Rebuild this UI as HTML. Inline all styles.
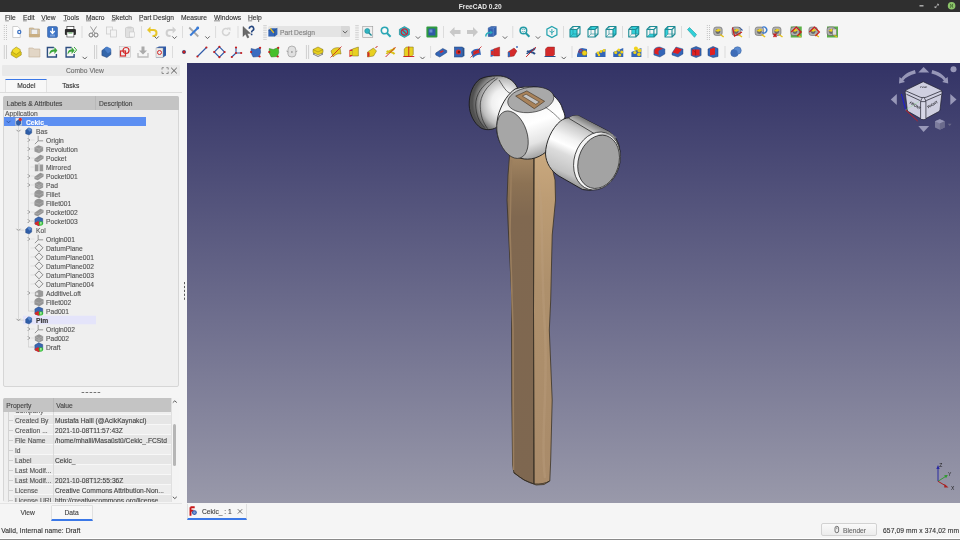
<!DOCTYPE html>
<html><head><meta charset="utf-8">
<style>
*{margin:0;padding:0;box-sizing:border-box}
#root{position:absolute;left:0;top:0;width:960px;height:540px;will-change:transform}
html,body{width:960px;height:540px;overflow:hidden;background:#f5f5f5;font-family:"Liberation Sans",sans-serif;font-size:6.7px;color:#3a3a3a}
.a{position:absolute;white-space:nowrap;line-height:8px;-webkit-text-stroke:0.12px currentColor}
svg{position:absolute;overflow:visible}
#vp{position:absolute;left:187px;top:63px;width:773px;height:440px;background:linear-gradient(#333366,#9999aa);overflow:hidden}
.m{color:#333}
</style></head><body><div id="root">
<div style="position:absolute;left:0;top:0;width:960px;height:11.7px;background:#2f2f2f"></div>
<div class="a" style="left:458.8px;top:3.3px;color:#e8e8e8;font-weight:bold;font-size:6.6px;-webkit-text-stroke:0">FreeCAD 0.20</div>
<svg style="left:0;top:0" width="960" height="12">
<rect x="919.5" y="5.1" width="4" height="1.4" fill="#b4b4b4"/>
<path d="M935,7.6l1.6,-1.6M935,7.6v-1.4M935,7.6h1.4M938.4,4.2l-1.6,1.6M938.4,4.2v1.4M938.4,4.2h-1.4" stroke="#c4c4c4" stroke-width="0.8" fill="none"/>
<circle cx="951.6" cy="5.8" r="3.8" fill="#8cc56a"/>
<path d="M950.3,3.9c0.9,1.2 0.9,2.6 0,3.8M952.9,3.9c-0.9,1.2 -0.9,2.6 0,3.8" stroke="#2c4a20" stroke-width="0.8" fill="none"/>
</svg>
<div class="a m" style="left:5px;top:13.6px">File</div>
<div class="a m" style="left:23px;top:13.6px">Edit</div>
<div class="a m" style="left:41.3px;top:13.6px">View</div>
<div class="a m" style="left:63.4px;top:13.6px">Tools</div>
<div class="a m" style="left:86px;top:13.6px">Macro</div>
<div class="a m" style="left:111.6px;top:13.6px">Sketch</div>
<div class="a m" style="left:139px;top:13.6px">Part Design</div>
<div class="a m" style="left:181px;top:13.6px">Measure</div>
<div class="a m" style="left:214px;top:13.6px">Windows</div>
<div class="a m" style="left:248px;top:13.6px">Help</div>
<svg style="left:0;top:0" width="960" height="25">
<rect x="5.2" y="20.6" width="3.6" height="0.6" fill="#444"/>
<rect x="23" y="20.6" width="3.8" height="0.6" fill="#444"/>
<rect x="41.3" y="20.6" width="4" height="0.6" fill="#444"/>
<rect x="63.4" y="20.6" width="3.6" height="0.6" fill="#444"/>
<rect x="86" y="20.6" width="5" height="0.6" fill="#444"/>
<rect x="111.6" y="20.6" width="4" height="0.6" fill="#444"/>
<rect x="139" y="20.6" width="4" height="0.6" fill="#444"/>
<rect x="214" y="20.6" width="6" height="0.6" fill="#444"/>
<rect x="248" y="20.6" width="4.2" height="0.6" fill="#444"/>
</svg>
<svg style="left:0;top:0" width="960" height="64"><rect x="3.8000000000000003" y="25" width="1" height="1" fill="#c4c4c4"/><rect x="6.0" y="25" width="1" height="1" fill="#c4c4c4"/><rect x="3.8000000000000003" y="27" width="1" height="1" fill="#c4c4c4"/><rect x="6.0" y="27" width="1" height="1" fill="#c4c4c4"/><rect x="3.8000000000000003" y="29" width="1" height="1" fill="#c4c4c4"/><rect x="6.0" y="29" width="1" height="1" fill="#c4c4c4"/><rect x="3.8000000000000003" y="31" width="1" height="1" fill="#c4c4c4"/><rect x="6.0" y="31" width="1" height="1" fill="#c4c4c4"/><rect x="3.8000000000000003" y="33" width="1" height="1" fill="#c4c4c4"/><rect x="6.0" y="33" width="1" height="1" fill="#c4c4c4"/><rect x="3.8000000000000003" y="35" width="1" height="1" fill="#c4c4c4"/><rect x="6.0" y="35" width="1" height="1" fill="#c4c4c4"/><rect x="3.8000000000000003" y="37" width="1" height="1" fill="#c4c4c4"/><rect x="6.0" y="37" width="1" height="1" fill="#c4c4c4"/><rect x="3.8000000000000003" y="39" width="1" height="1" fill="#c4c4c4"/><rect x="6.0" y="39" width="1" height="1" fill="#c4c4c4"/><g transform="translate(10.25,26.0) scale(1.0)"><path d="M2.5,0.5h5l2.5,2.5v8.5h-7.5z" fill="#fff" stroke="#bbb" stroke-width="0.7"/><circle cx="9" cy="6" r="2.2" fill="#3e73c4"/><circle cx="9" cy="6" r="0.9" fill="#fff"/></g><g transform="translate(28.4,26.0) scale(1.0)"><path d="M1,2h4l1,1h5v8h-10z" fill="#d9c4a0" stroke="#b39a74" stroke-width="0.6"/><rect x="3" y="3.5" width="6" height="5" fill="#eee" stroke="#aaa" stroke-width="0.4"/><path d="M0.5,8h11l-0.5,3h-10z" fill="#c9ae82"/></g><g transform="translate(46.5,26.0) scale(1.0)"><rect x="1" y="0.5" width="10" height="11" rx="1.5" fill="#3d74c6" stroke="#2a5596" stroke-width="0.5"/><path d="M6,2v5M3.8,5l2.2,2.5l2.2,-2.5" stroke="#fff" stroke-width="1.3" fill="none"/><rect x="3.5" y="8.5" width="5" height="2" fill="#7aa0d8"/></g><g transform="translate(64.4,26.0) scale(1.0)"><rect x="2.5" y="0.5" width="7" height="3" fill="#fff" stroke="#333" stroke-width="0.7"/><rect x="0.5" y="3" width="11" height="6" rx="1" fill="#2b2b2b"/><rect x="2.5" y="6" width="7" height="5" fill="#fff" stroke="#333" stroke-width="0.6"/><rect x="4" y="6.5" width="4" height="1" fill="#5a5"/></g><rect x="81.5" y="26" width="1" height="12" fill="#dcdcdc"/><g transform="translate(87.5,26.0) scale(1.0)"><circle cx="3.5" cy="9" r="2" fill="none" stroke="#777" stroke-width="1"/><circle cx="8.5" cy="9" r="2" fill="none" stroke="#777" stroke-width="1"/><path d="M4.5,7.5L9,0.5M7.5,7.5L3,0.5" stroke="#999" stroke-width="1"/></g><g transform="translate(105.6,26.0) scale(1.0)"><rect x="1" y="1" width="6" height="7" fill="#f4f4f4" stroke="#c8c8c8" stroke-width="0.7"/><rect x="5" y="4" width="6" height="7" fill="#f4f4f4" stroke="#c8c8c8" stroke-width="0.7"/></g><g transform="translate(124.0,26.0) scale(1.0)"><rect x="1.5" y="1.5" width="8" height="10" rx="1" fill="#e0e0e0" stroke="#c4c4c4" stroke-width="0.7"/><rect x="3.5" y="0.5" width="4" height="2" fill="#cfcfcf"/><rect x="5.5" y="6" width="5" height="5" fill="#f6f6f6" stroke="#c8c8c8" stroke-width="0.6"/></g><rect x="141.0" y="26" width="1" height="12" fill="#dcdcdc"/><g transform="translate(146.5,25.5) scale(1.0)"><path d="M3,4.5h4a3,3 0 0 1 0,6h-1" fill="none" stroke="#e8c62a" stroke-width="2"/><path d="M0.5,4.5l3.5,-3.5v7z" fill="#e8c62a"/></g><path d="M154.4,36.4 L156.6,38.6 L158.79999999999998,36.4" fill="none" stroke="#555" stroke-width="0.9"/><g transform="translate(164.6,25.5) scale(1.0)"><path d="M9,4.5h-4a3,3 0 0 0 0,6h1" fill="none" stroke="#cfcfcf" stroke-width="2"/><path d="M11.5,4.5l-3.5,-3.5v7z" fill="#cfcfcf"/></g><path d="M172.3,36.4 L174.5,38.6 L176.7,36.4" fill="none" stroke="#555" stroke-width="0.9"/><rect x="182.0" y="26" width="1" height="12" fill="#dcdcdc"/><g transform="translate(187.75,26.0) scale(1.0)"><path d="M1.5,1.5l9,9" stroke="#aaa" stroke-width="1.8"/><path d="M10.5,1.5l-8,8" stroke="#3a7bd5" stroke-width="2"/><circle cx="10" cy="2" r="1.4" fill="#3a7bd5"/></g><path d="M205.3,36.4 L207.5,38.6 L209.7,36.4" fill="none" stroke="#555" stroke-width="0.9"/><rect x="215.1" y="26" width="1" height="12" fill="#dcdcdc"/><g transform="translate(220.0,26.0) scale(1.0)"><path d="M9.5,6a3.5,3.5 0 1 1 -1.2,-2.7" fill="none" stroke="#d4d4d4" stroke-width="1.6"/><path d="M7,1.5h3.5v3.5z" fill="#d4d4d4"/></g><rect x="237.5" y="26" width="1" height="12" fill="#dcdcdc"/><g transform="translate(242.0,26.0) scale(1.0)"><path d="M1,0.5v10l2.5,-2.5l2,4l1.5,-0.8l-2,-3.8h3.5z" fill="#6a6a6a" stroke="#444" stroke-width="0.4"/><path d="M7.3,2.8a2.2,2.2 0 1 1 3.2,1.8c-0.7,0.5 -0.9,0.9 -0.9,1.9" fill="none" stroke="#24457e" stroke-width="1.6"/><circle cx="9.6" cy="8.4" r="0.9" fill="#24457e"/></g><rect x="263.2" y="25" width="3.6" height="0.8" fill="#cfcfcf"/><rect x="263.2" y="26.75" width="3.6" height="0.8" fill="#cfcfcf"/><rect x="263.2" y="28.5" width="3.6" height="0.8" fill="#cfcfcf"/><rect x="263.2" y="30.25" width="3.6" height="0.8" fill="#cfcfcf"/><rect x="263.2" y="32.0" width="3.6" height="0.8" fill="#cfcfcf"/><rect x="263.2" y="33.75" width="3.6" height="0.8" fill="#cfcfcf"/><rect x="263.2" y="35.5" width="3.6" height="0.8" fill="#cfcfcf"/><rect x="263.2" y="37.25" width="3.6" height="0.8" fill="#cfcfcf"/><rect x="263.2" y="39.0" width="3.6" height="0.8" fill="#cfcfcf"/><rect x="355.2" y="25" width="3.6" height="0.8" fill="#cfcfcf"/><rect x="355.2" y="26.75" width="3.6" height="0.8" fill="#cfcfcf"/><rect x="355.2" y="28.5" width="3.6" height="0.8" fill="#cfcfcf"/><rect x="355.2" y="30.25" width="3.6" height="0.8" fill="#cfcfcf"/><rect x="355.2" y="32.0" width="3.6" height="0.8" fill="#cfcfcf"/><rect x="355.2" y="33.75" width="3.6" height="0.8" fill="#cfcfcf"/><rect x="355.2" y="35.5" width="3.6" height="0.8" fill="#cfcfcf"/><rect x="355.2" y="37.25" width="3.6" height="0.8" fill="#cfcfcf"/><rect x="355.2" y="39.0" width="3.6" height="0.8" fill="#cfcfcf"/><g transform="translate(361.75,26.0) scale(1.0)"><rect x="1" y="0.5" width="10" height="11" fill="#f0f0f0" stroke="#999" stroke-width="0.6"/><circle cx="5.5" cy="5" r="2.5" fill="#2fb3c0" stroke="#1b8a95" stroke-width="0.6"/><path d="M7,6.8l2.8,2.8" stroke="#1b8a95" stroke-width="1.4"/></g><g transform="translate(379.6,26.0) scale(1.0)"><circle cx="5" cy="4.5" r="3.3" fill="none" stroke="#2aa6b4" stroke-width="1.6"/><circle cx="5" cy="4.5" r="1.2" fill="#fff"/><path d="M7.3,7l3.7,3.7" stroke="#2aa6b4" stroke-width="2"/></g><g transform="translate(398.4,26.0) scale(1.0)"><path d="M6,0.5l5,2.8v5.4l-5,2.8l-5,-2.8v-5.4z" fill="#2ab7c4" stroke="#167f8a" stroke-width="0.6"/><circle cx="6" cy="6" r="3.2" fill="none" stroke="#c8243a" stroke-width="1.2"/><path d="M3.8,3.8l4.4,4.4" stroke="#c8243a" stroke-width="1.2"/></g><path d="M415.8,36.4 L418,38.6 L420.2,36.4" fill="none" stroke="#555" stroke-width="0.9"/><g transform="translate(425.9,26.0) scale(1.0)"><rect x="0.5" y="0.5" width="11" height="11" rx="1" fill="#2e9a3e"/><rect x="2.5" y="2.5" width="7" height="7" fill="#2f5aa8"/><rect x="3.5" y="3.5" width="3" height="3" fill="#6a8fd0"/></g><rect x="443.0" y="26" width="1" height="12" fill="#dcdcdc"/><g transform="translate(449.0,26.0) scale(1.0)"><path d="M0.5,6l5,-5v3h6v4h-6v3z" fill="#c8c8c8"/></g><g transform="translate(466.5,26.0) scale(1.0)"><path d="M11.5,6l-5,-5v3h-6v4h6v3z" fill="#c8c8c8"/></g><g transform="translate(485.25,26.0) scale(1.0)"><path d="M3,2l3,-1.5h5v8l-3,2h-5z" fill="#3362b0" stroke="#234a8a" stroke-width="0.5"/><path d="M3,2h5v8M8,2l3,-1.5" stroke="#6f93d4" stroke-width="0.6" fill="none"/><path d="M0.5,10.5c0,-3 2,-4 5,-4" stroke="#2ab0bd" stroke-width="1.5" fill="none"/><path d="M5,4.5l2.5,2l-2.5,2z" fill="#2ab0bd"/></g><path d="M502.8,36.4 L505,38.6 L507.2,36.4" fill="none" stroke="#555" stroke-width="0.9"/><rect x="512.25" y="26" width="1" height="12" fill="#dcdcdc"/><g transform="translate(518.4,26.0) scale(1.0)"><circle cx="5" cy="4.5" r="3.3" fill="none" stroke="#239aa6" stroke-width="1.5"/><path d="M3.5,4a1.6,1.6 0 0 1 3,0M6.5,5a1.6,1.6 0 0 1 -3,0" stroke="#239aa6" stroke-width="0.7" fill="none"/><path d="M7.3,7l3.7,3.7" stroke="#239aa6" stroke-width="2"/></g><path d="M535.8,36.4 L538,38.6 L540.2,36.4" fill="none" stroke="#555" stroke-width="0.9"/><g transform="translate(545.9,26.0) scale(1.0)"><path d="M6,0.5l5,2.7v5.6l-5,2.7l-5,-2.7v-5.6z" fill="none" stroke="#23a2ad" stroke-width="1.2"/><path d="M6,3v6M3.5,5l2.5,1.5l2.5,-1.5" stroke="#23a2ad" stroke-width="0.9" fill="none"/></g><rect x="563.0" y="26" width="1" height="12" fill="#dcdcdc"/><g transform="translate(569.0,26.0) scale(1.0)"><path d="M1,3.5h7v7.5h-7z" fill="#33d0da"/><path d="M4,0.5v7.5h7M4,8l-3,3" fill="none" stroke="#1e8c95" stroke-width="0.6"/><path d="M1,3.5l3,-3h7v7.5l-3,3h-7z M1,3.5h7v7.5M8,3.5l3,-3" fill="none" stroke="#1e8c95" stroke-width="1.1" stroke-linejoin="round"/></g><g transform="translate(587.0,26.0) scale(1.0)"><path d="M1,3.5l3,-3h7l-3,3z" fill="#33d0da"/><path d="M4,0.5v7.5h7M4,8l-3,3" fill="none" stroke="#1e8c95" stroke-width="0.6"/><path d="M1,3.5l3,-3h7v7.5l-3,3h-7z M1,3.5h7v7.5M8,3.5l3,-3" fill="none" stroke="#1e8c95" stroke-width="1.1" stroke-linejoin="round"/></g><g transform="translate(605.0,26.0) scale(1.0)"><path d="M8,3.5l3,-3v7.5l-3,3z" fill="#33d0da"/><path d="M4,0.5v7.5h7M4,8l-3,3" fill="none" stroke="#1e8c95" stroke-width="0.6"/><path d="M1,3.5l3,-3h7v7.5l-3,3h-7z M1,3.5h7v7.5M8,3.5l3,-3" fill="none" stroke="#1e8c95" stroke-width="1.1" stroke-linejoin="round"/></g><rect x="622.0" y="26" width="1" height="12" fill="#dcdcdc"/><g transform="translate(627.75,26.0) scale(1.0)"><path d="M4,0.5h7v7.5h-7z" fill="#33d0da"/><path d="M4,0.5v7.5h7M4,8l-3,3" fill="none" stroke="#1e8c95" stroke-width="0.6"/><path d="M1,3.5l3,-3h7v7.5l-3,3h-7z M1,3.5h7v7.5M8,3.5l3,-3" fill="none" stroke="#1e8c95" stroke-width="1.1" stroke-linejoin="round"/></g><g transform="translate(645.9,26.0) scale(1.0)"><path d="M1,11l3,-3h7l-3,3z" fill="#33d0da"/><path d="M4,0.5v7.5h7M4,8l-3,3" fill="none" stroke="#1e8c95" stroke-width="0.6"/><path d="M1,3.5l3,-3h7v7.5l-3,3h-7z M1,3.5h7v7.5M8,3.5l3,-3" fill="none" stroke="#1e8c95" stroke-width="1.1" stroke-linejoin="round"/></g><g transform="translate(664.0,26.0) scale(1.0)"><path d="M1,3.5l3,-3v7.5l-3,3z" fill="#33d0da"/><path d="M4,0.5v7.5h7M4,8l-3,3" fill="none" stroke="#1e8c95" stroke-width="0.6"/><path d="M1,3.5l3,-3h7v7.5l-3,3h-7z M1,3.5h7v7.5M8,3.5l3,-3" fill="none" stroke="#1e8c95" stroke-width="1.1" stroke-linejoin="round"/></g><rect x="681.0" y="26" width="1" height="12" fill="#dcdcdc"/><g transform="translate(686.0,26.0) scale(1.0)"><path d="M1.5,3.5l2,-2l7,7l-2,2.8z" fill="#2fd0d8" stroke="#1e9aa3" stroke-width="0.6"/></g><rect x="706.8" y="25" width="1" height="1" fill="#c4c4c4"/><rect x="709.0" y="25" width="1" height="1" fill="#c4c4c4"/><rect x="706.8" y="27" width="1" height="1" fill="#c4c4c4"/><rect x="709.0" y="27" width="1" height="1" fill="#c4c4c4"/><rect x="706.8" y="29" width="1" height="1" fill="#c4c4c4"/><rect x="709.0" y="29" width="1" height="1" fill="#c4c4c4"/><rect x="706.8" y="31" width="1" height="1" fill="#c4c4c4"/><rect x="709.0" y="31" width="1" height="1" fill="#c4c4c4"/><rect x="706.8" y="33" width="1" height="1" fill="#c4c4c4"/><rect x="709.0" y="33" width="1" height="1" fill="#c4c4c4"/><rect x="706.8" y="35" width="1" height="1" fill="#c4c4c4"/><rect x="709.0" y="35" width="1" height="1" fill="#c4c4c4"/><rect x="706.8" y="37" width="1" height="1" fill="#c4c4c4"/><rect x="709.0" y="37" width="1" height="1" fill="#c4c4c4"/><rect x="706.8" y="39" width="1" height="1" fill="#c4c4c4"/><rect x="709.0" y="39" width="1" height="1" fill="#c4c4c4"/><g transform="translate(713.2,26.0) scale(1.0)"><rect x="0.5" y="1" width="8.5" height="8.5" rx="2.5" fill="#b0b0b0" stroke="#555" stroke-width="0.5"/><circle cx="4.7" cy="5.5" r="2.4" fill="#6a6a6a"/><path d="M1.8,5l3.2,-2.2l3,1.2l-3,1.8z" fill="#f0d21a"/><path d="M7,8.5l3.5,2.5" stroke="#e6c21a" stroke-width="1.5"/></g><g transform="translate(731.5,26.0) scale(1.0)"><path d="M2,1.5h6l3,3" fill="none" stroke="#2f5aa8" stroke-width="1.2"/><rect x="0.5" y="1" width="8.5" height="8.5" rx="2.5" fill="#b0b0b0" stroke="#555" stroke-width="0.5"/><circle cx="4.7" cy="5.5" r="2.4" fill="#6a6a6a"/><path d="M1.8,5l3.2,-2.2l3,1.2l-3,1.8z" fill="#f0d21a"/><path d="M7,8.5l3.5,2.5" stroke="#e6c21a" stroke-width="1.5"/><path d="M1,1.5l2,8.5l7.5,-4" fill="none" stroke="#c81e1e" stroke-width="1.2"/></g><rect x="748.8" y="26" width="1" height="12" fill="#dcdcdc"/><g transform="translate(754.6,26.0) scale(1.0)"><rect x="0.5" y="1" width="8.5" height="8.5" rx="2.5" fill="#b0b0b0" stroke="#555" stroke-width="0.5"/><circle cx="4.7" cy="5.5" r="2.4" fill="#6a6a6a"/><path d="M1.8,5l3.2,-2.2l3,1.2l-3,1.8z" fill="#f0d21a"/><path d="M7,8.5l3.5,2.5" stroke="#e6c21a" stroke-width="1.5"/><path d="M7.5,1.5a3,3 0 1 1 0,5" fill="none" stroke="#3b7bd0" stroke-width="1.4"/></g><g transform="translate(772.0,26.0) scale(1.0)"><rect x="0.5" y="1" width="8.5" height="8.5" rx="2.5" fill="#b0b0b0" stroke="#555" stroke-width="0.5"/><circle cx="4.7" cy="5.5" r="2.4" fill="#6a6a6a"/><path d="M1.8,5l3.2,-2.2l3,1.2l-3,1.8z" fill="#f0d21a"/><path d="M7,8.5l3.5,2.5" stroke="#e6c21a" stroke-width="1.5"/><path d="M1.5,7.5l3,3.5M4.5,7.5l-3,3.5" stroke="#c81e1e" stroke-width="1.3"/></g><g transform="translate(790.25,26.0) scale(1.0)"><rect x="0.5" y="0.5" width="11" height="11" fill="#5bb046"/><rect x="0.5" y="1" width="8.5" height="8.5" rx="2.5" fill="#b0b0b0" stroke="#555" stroke-width="0.5"/><circle cx="4.7" cy="5.5" r="2.4" fill="#6a6a6a"/><path d="M1.8,5l3.2,-2.2l3,1.2l-3,1.8z" fill="#f0d21a"/><path d="M7,8.5l3.5,2.5" stroke="#e6c21a" stroke-width="1.5"/><path d="M1,6l5,-5l5,5l-4,4" fill="none" stroke="#c81e1e" stroke-width="1.2"/></g><g transform="translate(808.4,26.0) scale(1.0)"><rect x="0.5" y="1" width="8.5" height="8.5" rx="2.5" fill="#b0b0b0" stroke="#555" stroke-width="0.5"/><circle cx="4.7" cy="5.5" r="2.4" fill="#6a6a6a"/><path d="M1.8,5l3.2,-2.2l3,1.2l-3,1.8z" fill="#f0d21a"/><path d="M7,8.5l3.5,2.5" stroke="#e6c21a" stroke-width="1.5"/><path d="M1,6l5,-5l5,5l-4,4" fill="none" stroke="#c81e1e" stroke-width="1.2"/></g><g transform="translate(826.5,26.0) scale(1.0)"><rect x="0.5" y="0.5" width="11" height="11" fill="#5bb046"/><rect x="0.5" y="1" width="8.5" height="8.5" rx="2.5" fill="#b0b0b0" stroke="#555" stroke-width="0.5"/><circle cx="4.7" cy="5.5" r="2.4" fill="#6a6a6a"/><path d="M1.8,5l3.2,-2.2l3,1.2l-3,1.8z" fill="#f0d21a"/><path d="M7,8.5l3.5,2.5" stroke="#e6c21a" stroke-width="1.5"/><rect x="6" y="3" width="4" height="6" fill="#ddd" stroke="#555" stroke-width="0.4"/></g><rect x="3.8000000000000003" y="45" width="1" height="14" fill="#d0d0d0"/><rect x="6.0" y="45" width="1" height="14" fill="#d0d0d0"/><g transform="translate(10.25,46.0) scale(1.0)"><path d="M1,6l5,-3l5,3v3l-5,3l-5,-3z" fill="#e0c814" stroke="#8a7a10" stroke-width="0.5"/><path d="M2,4l4,-3l4,2.5v2l-4,3l-4,-2.5z" fill="#f2dc2a" stroke="#8a7a10" stroke-width="0.5"/></g><g transform="translate(28.4,46.0) scale(1.0)"><path d="M0.5,2h4l1,1h6v8h-11z" fill="#e2d6c6" stroke="#c2ae96" stroke-width="0.6"/></g><g transform="translate(45.9,46.0) scale(1.0)"><path d="M8,1.5h-6.5v9.5h9v-3" fill="none" stroke="#2c4e80" stroke-width="1.4"/><path d="M3.5,8.5c0,-4 2,-5 5,-5v-2.5l3,3.5l-3,3.5v-2.5c-2,0 -3.5,1 -5,3z" fill="#3aa63a"/></g><g transform="translate(64.6,46.0) scale(1.0)"><path d="M7,1.5h-5.5v9.5h8v-3" fill="none" stroke="#2c4e80" stroke-width="1.4"/><path d="M3,8.5c0,-4 2,-5 4,-5v-2.5l3,3.5l-3,3.5v-2.5c-2,0 -2.5,1 -4,3z" fill="#3aa63a"/><path d="M9.5,1l2.5,3l-2.5,3" fill="none" stroke="#3aa63a" stroke-width="1"/></g><path d="M82.55,56.8 L84.75,59 L86.95,56.8" fill="none" stroke="#555" stroke-width="0.9"/><rect x="94.0" y="45" width="1" height="14" fill="#d0d0d0"/><rect x="96.19999999999999" y="45" width="1" height="14" fill="#d0d0d0"/><g transform="translate(100.9,46.0) scale(1.0)"><path d="M1,4.5l4,-3l5,2v5l-4,3l-5,-2z" fill="#3366aa" stroke="#1e3d70" stroke-width="0.5"/><path d="M3,2.5l3,-2l4,2v3l-3,2z" fill="#4a7ec8"/></g><g transform="translate(119.0,46.0) scale(1.0)"><rect x="0.5" y="0.5" width="11" height="11" fill="#eee" stroke="#bbb" stroke-width="0.5"/><circle cx="7" cy="4.5" r="3" fill="none" stroke="#d42a2a" stroke-width="1.2"/><rect x="1.5" y="5" width="5" height="5" fill="none" stroke="#d42a2a" stroke-width="1.2"/></g><g transform="translate(137.0,46.0) scale(1.0)"><path d="M1,7v4h10v-4" fill="none" stroke="#bdbdbd" stroke-width="1.3"/><path d="M4.5,0.5h3v4h2.5l-4,4l-4,-4h2.5z" fill="#aaa"/></g><g transform="translate(155.0,46.0) scale(1.0)"><path d="M1,2l3,-1.5h7v9l-3,2h-7z" fill="#2f5aa8"/><rect x="1" y="2" width="7" height="9.5" fill="#e9e9e9" stroke="#999" stroke-width="0.4"/><circle cx="4.5" cy="6.5" r="2" fill="none" stroke="#d42a2a" stroke-width="1"/></g><rect x="172.0" y="46" width="1" height="12" fill="#dcdcdc"/><g transform="translate(178.0,46.0) scale(1.0)"><circle cx="6" cy="6" r="1.7" fill="#c81e1e" stroke="#2a3f7a" stroke-width="0.6"/></g><g transform="translate(195.9,46.0) scale(1.0)"><path d="M1.5,10.5l9,-9" stroke="#2f5aa8" stroke-width="1.2"/><circle cx="1.5" cy="10.5" r="1.1" fill="#c81e1e"/><circle cx="10.5" cy="1.5" r="1.1" fill="#c81e1e"/></g><g transform="translate(213.4,46.0) scale(1.0)"><path d="M6,0.8l5.2,5.2l-5.2,5.2l-5.2,-5.2z" fill="none" stroke="#2f5aa8" stroke-width="1.1"/><circle cx="6" cy="0.8" r="1.1" fill="#c81e1e"/><circle cx="11.2" cy="6" r="1.1" fill="#c81e1e"/><circle cx="6" cy="11.2" r="1.1" fill="#c81e1e"/><circle cx="0.8" cy="6" r="1.1" fill="#c81e1e"/></g><g transform="translate(230.0,46.0) scale(1.0)"><path d="M6,7V1.5M6,7L1.8,11M6,7H11.2" stroke="#2f5aa8" stroke-width="1.1"/><circle cx="6" cy="7" r="1.1" fill="#c81e1e"/><circle cx="6" cy="1.5" r="1.1" fill="#c81e1e"/><circle cx="1.8" cy="11" r="1.1" fill="#c81e1e"/><circle cx="11.2" cy="7" r="1.1" fill="#c81e1e"/></g><g transform="translate(249.6,46.0) scale(1.0)"><path d="M1.5,2.5l4,1l5,-2l0.5,5l-1.5,4l-6,0.5l-2,-4z" fill="#3b6cc0" stroke="#24467e" stroke-width="0.5"/><circle cx="10.5" cy="1.8" r="1.1" fill="#c81e1e"/><circle cx="1.5" cy="6" r="1.1" fill="#c81e1e"/><circle cx="10" cy="10.5" r="1.1" fill="#c81e1e"/></g><g transform="translate(267.75,46.0) scale(1.0)"><path d="M1.5,2.5l4,1l5,-2l0.5,5l-1.5,4l-6,0.5l-2,-4z" fill="#48c02c" stroke="#2d7a1c" stroke-width="0.5"/><circle cx="10.5" cy="1.8" r="1.1" fill="#c81e1e"/><circle cx="1.5" cy="6" r="1.1" fill="#c81e1e"/><circle cx="10" cy="10.5" r="1.1" fill="#c81e1e"/></g><g transform="translate(285.9,46.0) scale(1.0)"><path d="M2,4a4,4 0 0 1 8,0v4a4,3 0 0 1 -8,0z" fill="#e0e0e0" stroke="#999" stroke-width="0.7"/><path d="M0.5,5l2,1M11.5,5l-2,1" stroke="#999" stroke-width="0.8"/><circle cx="6" cy="6" r="0.8" fill="#777"/></g><rect x="305.9" y="45" width="1" height="14" fill="#d0d0d0"/><rect x="308.1" y="45" width="1" height="14" fill="#d0d0d0"/><g transform="translate(312.0,46.0) scale(1.0)"><path d="M1,8l5,-2.5l5,2.5l-5,2.5z" fill="none" stroke="#666" stroke-width="0.8"/><path d="M1,3.5l5,-2.5l5,2.5v3l-5,2.5l-5,-2.5z" fill="#e8d020" stroke="#7a6a10" stroke-width="0.5"/><path d="M1,3.5l5,2.5l5,-2.5" fill="none" stroke="#7a6a10" stroke-width="0.4"/></g><g transform="translate(330.0,46.0) scale(1.0)"><path d="M1,5c2,-3 6,-4 9,-3l1,6c-3,-1 -6,1 -8,3z" fill="#e8d020" stroke="#7a6a10" stroke-width="0.5"/><path d="M0.5,11.5l11,-11" stroke="#c81e1e" stroke-width="0.8"/></g><g transform="translate(348.4,46.0) scale(1.0)"><path d="M1,4l3,-1v7l-3,1z" fill="#d42a2a"/><path d="M4,3l6,-2v9l-6,0z" fill="#e8d020" stroke="#7a6a10" stroke-width="0.5"/><rect x="1.5" y="5" width="2.5" height="4" fill="#e8d020"/></g><g transform="translate(366.5,46.0) scale(1.0)"><path d="M1,6l6,-4l3,3l-3,5l-6,1z" fill="#e8d020" stroke="#7a6a10" stroke-width="0.5"/><path d="M1,6v5l2,-0.5v-4z" fill="#d42a2a"/><path d="M9,1.5l2,-1" stroke="#c81e1e" stroke-width="1"/></g><g transform="translate(384.6,46.0) scale(1.0)"><path d="M2,8c2,-5 6,-2 8,-6M2,5c3,2 5,0 8,3" fill="none" stroke="#d8c018" stroke-width="2"/><path d="M1,11l10,-10" stroke="#c81e1e" stroke-width="0.9"/></g><g transform="translate(402.75,46.0) scale(1.0)"><path d="M1.5,3l2,-2h7v7.5l-2,2h-7z" fill="#e8d020" stroke="#7a6a10" stroke-width="0.5"/><path d="M6,0.5v10M0.5,10.5h11" stroke="#c81e1e" stroke-width="0.9"/></g><path d="M420.3,56.8 L422.5,59 L424.7,56.8" fill="none" stroke="#555" stroke-width="0.9"/><rect x="430.1" y="46" width="1" height="12" fill="#dcdcdc"/><g transform="translate(435.25,46.0) scale(1.0)"><path d="M0.5,7l7,-4.5l4,2v2l-7,4.5l-4,-2z" fill="#3366b8" stroke="#1e3d70" stroke-width="0.5"/><path d="M4,6l3,-1.8l1.8,0.9l-3,1.8z" fill="#d42a2a"/></g><g transform="translate(453.4,46.0) scale(1.0)"><rect x="1" y="1" width="8" height="10" fill="#3366b8" stroke="#1e3d70" stroke-width="0.5"/><path d="M9,1l2,1v8l-2,1z" fill="#24508f"/><circle cx="5" cy="6" r="2.5" fill="#d42a2a"/><circle cx="5.5" cy="6" r="1.2" fill="#7a1414"/></g><g transform="translate(470.0,46.0) scale(1.0)"><path d="M1,6c2,-3 6,-4 9,-3l1,6c-3,-1 -6,1 -8,3z" fill="#3366b8"/><path d="M3,6c2,-2 4,-2 6,-2l0.5,3c-2,0 -4,1 -5.5,2z" fill="#d42a2a"/><path d="M0.5,11.5l11,-11" stroke="#c81e1e" stroke-width="0.8"/></g><g transform="translate(489.6,46.0) scale(1.0)"><path d="M1,4l3,-1v7l-3,1z" fill="#3366b8"/><path d="M4,3l6,-2v9l-6,0z" fill="#d42a2a" stroke="#7a1414" stroke-width="0.4"/><rect x="1.5" y="5" width="2.5" height="4" fill="#d42a2a"/></g><g transform="translate(507.0,46.0) scale(1.0)"><path d="M1,6l6,-4l3,3l-3,5l-6,1z" fill="#d42a2a" stroke="#7a1414" stroke-width="0.4"/><path d="M1,6v5l2,-0.5v-4z" fill="#3366b8"/><circle cx="10" cy="1" r="0.9" fill="#3366b8"/></g><g transform="translate(525.0,46.0) scale(1.0)"><path d="M2,8c2,-5 6,-2 8,-6M2,5c3,2 5,0 8,3" fill="none" stroke="#2c4e88" stroke-width="2"/><path d="M1,11l10,-10" stroke="#c81e1e" stroke-width="0.9"/></g><g transform="translate(544.0,46.0) scale(1.0)"><path d="M1.5,3l2,-2h7v7.5l-2,2h-7z" fill="#d42a2a" stroke="#7a1414" stroke-width="0.4"/><path d="M0.5,10.5h11" stroke="#2c4e88" stroke-width="1"/></g><path d="M561.55,56.8 L563.75,59 L565.95,56.8" fill="none" stroke="#555" stroke-width="0.9"/><rect x="571.5" y="46" width="1" height="12" fill="#dcdcdc"/><g transform="translate(576.5,46.0) scale(1.0)"><path d="M0.5,9l2,-6l3,-1l5,1v8h-10z" fill="#3366b8"/><path d="M2,6l2,-3l2,1l-1,3z" fill="#3a66c8" stroke="#c81e1e" stroke-width="0.6"/><circle cx="8" cy="7" r="2.5" fill="#f0d21a" stroke="#8a7a10" stroke-width="0.4"/></g><g transform="translate(595.0,46.0) scale(1.0)"><path d="M0.5,7l10,-4v8h-10z" fill="#3366b8"/><circle cx="3" cy="7" r="1.4" fill="#f0d21a"/><circle cx="6" cy="5.5" r="1.4" fill="#f0d21a"/><circle cx="9" cy="4.5" r="1.4" fill="#f0d21a"/><circle cx="4" cy="9" r="1.2" fill="#f0d21a"/></g><g transform="translate(612.75,46.0) scale(1.0)"><path d="M0.5,6l10,-4v9h-10z" fill="#3366b8"/><circle cx="3" cy="6.5" r="1.5" fill="#f0d21a"/><circle cx="6" cy="4" r="1.5" fill="#f0d21a"/><circle cx="9" cy="6" r="1.5" fill="#f0d21a"/><circle cx="7" cy="9" r="1.5" fill="#f0d21a"/></g><g transform="translate(630.9,46.0) scale(1.0)"><path d="M0.5,6l10,-4v9h-10z" fill="#3366b8"/><circle cx="5" cy="2.5" r="2" fill="#f0d21a"/><circle cx="8.5" cy="4.5" r="2" fill="#f0d21a"/><circle cx="4" cy="6.5" r="1.6" fill="#f0d21a"/><circle cx="8" cy="8.5" r="1.8" fill="#f0d21a"/></g><rect x="647.5" y="46" width="1" height="12" fill="#dcdcdc"/><g transform="translate(653.4,46.0) scale(1.0)"><path d="M0.5,5c0,-3 3,-4 6,-4l5,2v5l-5,3l-6,-2z" fill="#3366b8" stroke="#1e3d70" stroke-width="0.4"/><path d="M1,5c0,-2 2,-3.5 5,-3.5l4,1.5c-2,0 -5,1 -5,3l0.5,3l-4.5,-1.5z" fill="#e02020"/></g><g transform="translate(671.5,46.0) scale(1.0)"><path d="M0.5,7l4,-6l7,2v5l-5,3l-6,-2z" fill="#3366b8" stroke="#1e3d70" stroke-width="0.4"/><path d="M1,6.5l3.5,-5l6,2l-4,4.5z" fill="#e02020"/></g><g transform="translate(689.6,46.0) scale(1.0)"><path d="M1.5,2.5l5,-2l5,2v7l-5,2l-5,-2z" fill="#3366b8" stroke="#1e3d70" stroke-width="0.5"/><path d="M2.5,3.5h7.5v6h-7.5z" fill="#e02020"/><path d="M6,3.5v6M2.5,3.5l3.5,3" stroke="#7a1414" stroke-width="0.5"/></g><g transform="translate(707.0,46.0) scale(1.0)"><path d="M1,3l5,-2.5l5,2v8l-5,1l-5,-2z" fill="#3366b8" stroke="#1e3d70" stroke-width="0.5"/><path d="M3,3l5,-1.5v7l-5,1z" fill="#e02020"/></g><rect x="724.5" y="46" width="1" height="12" fill="#dcdcdc"/><g transform="translate(730.0,46.0) scale(1.0)"><circle cx="4.5" cy="7" r="3.8" fill="#3e6db8" stroke="#27508f" stroke-width="0.4"/><circle cx="7.5" cy="4.5" r="3.8" fill="#5a8ad0" stroke="#27508f" stroke-width="0.4"/><circle cx="4.5" cy="7" r="3.2" fill="#3e6db8"/></g></svg>
<!-- workbench combo -->
<div style="position:absolute;left:268px;top:26.4px;width:82px;height:10.8px;background:#e4e4e4;border-radius:1.5px"></div>
<div style="position:absolute;left:340.6px;top:26.4px;width:9.4px;height:10.8px;background:#d8d8d8;border-radius:0 1.5px 1.5px 0"></div>
<svg style="left:0;top:0" width="960" height="40">
<path d="M342.8,30.8l2.3,2.2l2.3,-2.2" fill="none" stroke="#555" stroke-width="0.9"/>
<g transform="translate(267.5,26.5) scale(0.9)"><path d="M1,4l3,-2h7v7l-3,2h-7z" fill="#3366b8"/><path d="M1,4h7v7M8,4l3,-2" stroke="#1e3d70" stroke-width="0.5" fill="none"/><path d="M3,2l4,5" stroke="#e8c020" stroke-width="1.5"/></g>
</svg>
<div class="a" style="left:280px;top:29px;color:#808080">Part Design</div>

<div id="vp"><svg style="left:-187px;top:-63px" width="960" height="540" viewBox="0 0 960 540">
<defs>
<linearGradient id="hl" x1="0" y1="0" x2="0" y2="1"><stop offset="0" stop-color="#a88a66"/><stop offset="0.1" stop-color="#8c7254"/><stop offset="0.2" stop-color="#806850"/><stop offset="1" stop-color="#7e6750"/></linearGradient>
<linearGradient id="hr" x1="0" y1="0" x2="0" y2="1"><stop offset="0" stop-color="#caa97f"/><stop offset="0.15" stop-color="#bc9c74"/><stop offset="0.4" stop-color="#ae906c"/><stop offset="1" stop-color="#a98b6a"/></linearGradient>
<radialGradient id="ball" cx="0.68" cy="0.5" r="0.62"><stop offset="0" stop-color="#ffffff"/><stop offset="0.4" stop-color="#f0f0f0"/><stop offset="0.7" stop-color="#bdbdbd"/><stop offset="1" stop-color="#505050"/></radialGradient>
<linearGradient id="body" gradientUnits="userSpaceOnUse" x1="520" y1="86" x2="545" y2="160"><stop offset="0" stop-color="#c8c8c8"/><stop offset="0.2" stop-color="#f4f4f4"/><stop offset="0.5" stop-color="#ffffff"/><stop offset="0.75" stop-color="#e4e4e4"/><stop offset="1" stop-color="#8a8a8a"/></linearGradient>
<linearGradient id="cyl" gradientUnits="userSpaceOnUse" x1="576" y1="119" x2="549" y2="180"><stop offset="0" stop-color="#9a9a9a"/><stop offset="0.12" stop-color="#cdcdcd"/><stop offset="0.3" stop-color="#f2f2f2"/><stop offset="0.42" stop-color="#ffffff"/><stop offset="0.55" stop-color="#dcdcdc"/><stop offset="0.8" stop-color="#c4c4c4"/><stop offset="1" stop-color="#7a7a7a"/></linearGradient>
<linearGradient id="cube" x1="0" y1="0" x2="0" y2="1"><stop offset="0" stop-color="#d6d6e4"/><stop offset="1" stop-color="#c4c4d6"/></linearGradient>
</defs>
<!-- handle -->
<path d="M510,150 L534,150 L533.5,310 L534,484 L524,480 L513.9,473 L512.6,465 L511.8,400 L511.6,330 L511.9,300 L508.6,235 L507,200 L508,175 Z" fill="url(#hl)" stroke="#3a3226" stroke-width="0.8"/>
<path d="M534,150 L548,150 L555,180 L555.5,200 L552.2,235 L550.7,300 L549.3,330 L552.2,400 L550.7,460 L549.8,481 L544,484.5 L536,485 L534,484 L533.5,310 Z" fill="url(#hr)" stroke="#3a3226" stroke-width="0.8"/>
<path d="M511.5,160 L510,230 L513,330 L513.5,470" stroke="#9a7e5e" stroke-width="1.6" fill="none"/>
<path d="M514,472.5 Q525,482 534,484 Q544,484.5 549.5,481" stroke="#2e2820" stroke-width="0.8" fill="none"/>
<path d="M534,156 L533.5,310 L534,484" stroke="#40362a" stroke-width="0.9" fill="none"/>
<path d="M536,170 C545,200 540,260 545,330 C548,400 540,440 545,478" stroke="#bca080" stroke-width="2.5" fill="none" opacity="0.35"/>
<!-- ball peen -->
<path d="M497,75.8 C506,75.5 514,80 517.5,88 L521,100 L510,122 L496.4,127.5 C492,130 486,130.5 481,128 C474,123.5 469.5,114 469.2,105 C469,94 473,84 480,79 C485,76.5 491,76 497,75.8 Z" fill="url(#ball)" stroke="#1a1a1a" stroke-width="0.9"/>
<path d="M495,77.8 C482,84 475.5,95 475.7,105 C476,115 479,122 484.7,127.5" fill="none" stroke="#2a2a2a" stroke-width="0.7"/>
<path d="M497.5,78.3 C486.5,86 480,96 480.2,106 C480.5,116 483,122.5 487.5,128.5" fill="none" stroke="#2a2a2a" stroke-width="0.7"/>
<path d="M499,80 C503,86 506,92 510.7,93.5 C513,93.8 515,92.5 517.5,90.5" fill="none" stroke="#2a2a2a" stroke-width="0.7"/>
<!-- central body -->
<path d="M515,89 C522,86.5 528,86.8 533.5,87 C543,87.5 550,90 553.5,95.4 C558,100 561.5,104 562.4,108.7 C564,112 564.8,114.5 565,117 L556,140 L548,150 C545,153 541,156 535,158 C530,159.5 525,159.5 521,158.3 C510,156 500,147 497.5,135 C496,127 497,117 500,110 C503,102 508,94 515,89 Z" fill="url(#body)" stroke="#1a1a1a" stroke-width="0.9"/>
<ellipse cx="530.8" cy="99.8" rx="23.2" ry="12.6" transform="rotate(-8 530.8 99.8)" fill="#a9a9a9" stroke="#1a1a1a" stroke-width="0.6"/>
<path d="M515.7,96.1 L526.9,90.9 L544.6,101.3 L534.3,108.7 Z" fill="#a8825a" stroke="#3a2e20" stroke-width="0.6"/>
<path d="M522.4,96.1 L526.1,94.2 L539.4,102 L535.7,104.3 Z" fill="#c4c4c4" stroke="#3a2e20" stroke-width="0.5"/>
<path d="M545.4,107.2 C551,111 556,115 560.2,119.8" fill="none" stroke="#333" stroke-width="0.6"/>
<ellipse cx="512.5" cy="134.7" rx="14.5" ry="24.5" transform="rotate(-18 512.5 134.7)" fill="#a6a6a6" stroke="#2a2a2a" stroke-width="0.7"/>
<!-- face cylinder -->
<defs><linearGradient id="cyltop" gradientUnits="userSpaceOnUse" x1="590" y1="122" x2="586" y2="130"><stop offset="0" stop-color="#7c7c7c"/><stop offset="1" stop-color="#d4d4d4"/></linearGradient></defs>
<path d="M560.5,121 C563,119 566,118 569,117.8 C572,115.8 575,115.3 578.5,115.8 L608.6,131.4 C614,134.5 619.5,142 619.8,151 C619.5,168 605,187 590,190.3 L582.5,189.5 L558.9,176 C551,171 546,163 545.5,154 C545.5,142 552,128 560.5,121 Z" fill="url(#cyl)" stroke="#1a1a1a" stroke-width="0.9"/>
<path d="M569,118 C572,115.8 575,115.3 578.5,115.8 L608.6,131.4 C611,132.8 612.5,134 614,135.5 L598,135.8 L569,118.6 Z" fill="url(#cyltop)"/>
<path d="M569,118.4 L597.5,135.5" stroke="#1a1a1a" stroke-width="0.7"/>
<ellipse cx="597" cy="161" rx="22.8" ry="29.5" transform="rotate(17 597 161)" fill="#f4f4f4" stroke="#1a1a1a" stroke-width="0.7"/>
<path d="M598,135.6 C605,133 612,134.5 616,138" fill="none" stroke="#9a9a9a" stroke-width="2" opacity="0.6"/>
<ellipse cx="598.6" cy="161.8" rx="20.2" ry="27.2" transform="rotate(17 598.6 161.8)" fill="#a3a3a3" stroke="#1a1a1a" stroke-width="0.7"/>
<!-- nav cube arrows -->
<g fill="#9d9dbd" opacity="0.95">
<path d="M923.6,66.9 L929.2,72.4 L918.3,72.4 Z"/>
<path d="M923.6,132.1 L929.2,125.9 L918.3,125.9 Z"/>
<path d="M890.8,99.5 L896.8,94 L896.8,105 Z"/>
<path d="M956.5,99.5 L950.3,94 L950.3,105 Z"/>
<circle cx="953.5" cy="69.2" r="3"/>
<path d="M914.9,70 C909,71.5 904,74.5 901.5,78.5 L899.5,77 L899,83.5 L905,82 L903.3,80.5 C905.5,77.5 910,75 915.8,73.5 Z"/>
<path d="M932.3,70 C938.2,71.5 943.2,74.5 945.7,78.5 L947.7,77 L948.2,83.5 L942.2,82 L943.9,80.5 C941.7,77.5 937.2,75 931.4,73.5 Z"/>
<path d="M939.8,119.2 L944.6,121.3 L944.6,127.5 L939.8,129.8 L935,127.5 L935,121.3 Z" fill="#8080a0"/><path d="M935,121.3 L939.8,123.4 L944.6,121.3 L939.8,119.2 Z" fill="#9a9aba"/><path d="M939.8,123.4 L944.6,121.3 L944.6,127.5 L939.8,129.8 Z" fill="#6e6e8e"/>
<path d="M947.8,123.8 L951.6,123.8 L949.7,126 Z" fill="#6a6a88"/>
</g>
<!-- nav cube -->
<path d="M923.2,81.7 L940.5,89.8 Q942.2,90.8 942,92.5 L940,109.8 Q939.8,111 938.8,111.6 L924.5,119.3 Q923.2,120 921.9,119.3 L908.4,111.6 Q907.4,111 907.3,109.8 L905.2,92.5 Q905,90.8 906.5,89.8 Z" fill="#cfcfe0" stroke="#20202c" stroke-width="0.7" stroke-linejoin="round"/>
<path d="M905.6,90.8 L920.2,97.2 Q923.2,98.5 926.2,97.2 L941.6,90.8" fill="none" stroke="#20202c" stroke-width="0.75"/>
<path d="M906.4,94.2 L920.2,100.6 M926.2,100.6 L941.2,94.2" fill="none" stroke="#20202c" stroke-width="0.75"/>
<path d="M920.6,119 L920.6,101.5 Q921.5,97.8 923.2,97.3 Q925,97.8 925.9,101.5 L925.9,119" fill="#d6d6e6" stroke="#20202c" stroke-width="0.7"/>
<path d="M920.6,101.6 L925.9,101.6" stroke="#20202c" stroke-width="0.7"/>
<g font-family="Liberation Sans" font-weight="bold" font-size="3.6" fill="#2a2a30">
<text transform="translate(919.6,88.4) skewX(-20) scale(1,0.6)">TOP</text>
<text transform="translate(909.2,103.2) rotate(32) skewX(-8)">FRONT</text>
<text transform="translate(928.6,108.2) rotate(-30) skewX(8)">RIGHT</text>
</g>
<path d="M905.6,109.9 L901.4,94" stroke="#1a1ae0" stroke-width="0.9"/>
<path d="M905.6,109.9 L917.6,121" stroke="#d01818" stroke-width="0.9"/>
<path d="M905.6,109.9 L919,101.6" stroke="#8de08d" stroke-width="0.7" stroke-dasharray="1,0.6"/>
<!-- axis triad -->
<path d="M938,481.3 L938,467.5" stroke="#2a2aa0" stroke-width="1"/>
<path d="M936.3,469 L938,465 L939.7,469 Z" fill="#2a2aa0"/>
<path d="M938,481.3 L945.5,476.5" stroke="#2a9a2a" stroke-width="0.9"/>
<path d="M944.2,475.2 L947.8,475 L946,478.2 Z" fill="#2a9a2a"/>
<path d="M938,481.3 L946,486" stroke="#aa2020" stroke-width="1"/>
<path d="M944.5,484 L948.5,487.5 L944.2,487.6 Z" fill="#aa2020"/>
<text x="939.3" y="467" font-size="5" fill="#222" font-family="Liberation Sans">Z</text>
<text x="948" y="476.3" font-size="5" fill="#222" font-family="Liberation Sans">Y</text>
<text x="951" y="489.5" font-size="5" fill="#222" font-family="Liberation Sans">X</text>
</svg>
</div>

<!-- combo view -->
<div style="position:absolute;left:2px;top:64.8px;width:178px;height:11px;background:#e9e9e9;border-radius:1px"></div>
<div class="a" style="left:66px;top:66.8px;color:#707070">Combo View</div>
<svg style="left:0;top:0" width="190" height="80">
<path d="M162,69.6v-1.9h1.9M166.3,67.7h1.9v1.9M168.2,71.6v1.9h-1.9M163.9,73.5h-1.9v-1.9" fill="none" stroke="#777" stroke-width="0.8"/>
<path d="M171.2,67.8l5.6,5.6M176.8,67.8l-5.6,5.6" stroke="#444" stroke-width="0.85"/>
</svg>
<div style="position:absolute;left:5px;top:78.5px;width:42.2px;height:14px;background:#f8f8f8;border-top:1.7px solid #3b78e7;border-left:1px solid #e2e2e2;border-right:1px solid #e2e2e2"></div>
<div style="position:absolute;left:0;top:92.2px;width:182px;height:0.8px;background:#dcdcdc"></div>
<div class="a" style="left:17.2px;top:81.6px;color:#333">Model</div>
<div class="a" style="left:62.2px;top:81.6px;color:#333">Tasks</div>

<!-- tree -->
<div style="position:absolute;left:3px;top:96.4px;width:176px;height:290.6px;background:#efefef;border:0.8px solid #d6d6d6;border-radius:2px"></div>
<div style="position:absolute;left:3px;top:96.4px;width:176px;height:13.4px;background:#c4c4c4;border-radius:2px 2px 0 0"></div>
<div style="position:absolute;left:95px;top:96.4px;width:0.8px;height:13.4px;background:#b8b8b8"></div>
<div class="a" style="left:6.7px;top:100px;color:#444">Labels &amp; Attributes</div>
<div class="a" style="left:99px;top:100px;color:#444">Description</div>
<div class="a" style="left:5px;top:109.6px;color:#555">Application</div>
<div style="position:absolute;left:3.7px;top:117.2px;width:142.2px;height:9px;background:#5c8ff2"></div>
<svg style="left:0;top:0" width="190" height="390"><path d="M6.5,120.8L8.5,122.8L10.5,120.8" fill="none" stroke="#2d4f9a" stroke-width="0.8"/><g transform="translate(14.02,117.02) scale(0.83)"><rect x="1.5" y="1" width="8" height="9.5" fill="#dfe6ef" stroke="#7d8ea8" stroke-width="0.5"/><path d="M2.5,5l3,-2l3,1.5v4l-3,2l-3,-1.5z" fill="#2f5ea8"/><circle cx="7.5" cy="3" r="2" fill="#d42a2a"/></g><path d="M16.5,129.8L18.5,131.8L20.5,129.8" fill="none" stroke="#777" stroke-width="0.8"/><g transform="translate(24.92,126.92) scale(0.68)"><path d="M1,5l4,-3.5l5,2v5.5l-4,3l-5,-2z" fill="#2f5ea8" stroke="#1d3f78" stroke-width="0.5"/><path d="M3.5,3l2.5,-2l3.5,1.5v2.5l-2.5,2z" fill="#5a88cc"/></g><path d="M27.7,138.0L29.7,140.0L27.7,142.0" fill="none" stroke="#666" stroke-width="0.8"/><rect x="30.5" y="139.75" width="4" height="0.5" fill="#cfcfcf"/><g transform="translate(34.02,135.02) scale(0.83)"><path d="M5,1v6l-4,4M5,7h6" fill="none" stroke="#777" stroke-width="0.9"/></g><path d="M27.7,147.0L29.7,149.0L27.7,151.0" fill="none" stroke="#666" stroke-width="0.8"/><rect x="30.5" y="148.75" width="4" height="0.5" fill="#cfcfcf"/><g transform="translate(34.02,144.02) scale(0.83)"><path d="M0.5,4l5,-2.5l5.5,2v5l-5,2.5l-5.5,-2z" fill="#989898"/><path d="M0.5,4l5.5,2l5,-2.5M6,6v5" stroke="#c8c8c8" stroke-width="0.5" fill="none"/></g><path d="M27.7,156.0L29.7,158.0L27.7,160.0" fill="none" stroke="#666" stroke-width="0.8"/><rect x="30.5" y="157.75" width="4" height="0.5" fill="#cfcfcf"/><g transform="translate(34.02,153.02) scale(0.83)"><path d="M0.5,7l7,-5l4,1.5v3l-7,4.5l-4,-1.5z" fill="#959595"/><path d="M0.5,7l4,1.5l7,-4.5" stroke="#c8c8c8" stroke-width="0.5" fill="none"/></g><rect x="30.5" y="166.75" width="4" height="0.5" fill="#cfcfcf"/><g transform="translate(34.02,162.02) scale(0.83)"><path d="M1,3h4v8h-4zM7,3h4v8h-4z" fill="#999"/><path d="M6,1v10" stroke="#888" stroke-width="0.6"/></g><path d="M27.7,174.0L29.7,176.0L27.7,178.0" fill="none" stroke="#666" stroke-width="0.8"/><rect x="30.5" y="175.75" width="4" height="0.5" fill="#cfcfcf"/><g transform="translate(34.02,171.02) scale(0.83)"><path d="M0.5,7l7,-5l4,1.5v3l-7,4.5l-4,-1.5z" fill="#959595"/><path d="M0.5,7l4,1.5l7,-4.5" stroke="#c8c8c8" stroke-width="0.5" fill="none"/></g><path d="M27.7,183.0L29.7,185.0L27.7,187.0" fill="none" stroke="#666" stroke-width="0.8"/><rect x="30.5" y="184.75" width="4" height="0.5" fill="#cfcfcf"/><g transform="translate(34.02,180.02) scale(0.83)"><path d="M1,4l5,-2.5l5,2.5v5l-5,2.5l-5,-2.5z" fill="#959595"/><path d="M1,4l5,2.5l5,-2.5M6,6.5v5M1,6.5l5,2.5l5,-2.5" stroke="#cacaca" stroke-width="0.5" fill="none"/></g><rect x="30.5" y="193.75" width="4" height="0.5" fill="#cfcfcf"/><g transform="translate(34.02,189.02) scale(0.83)"><path d="M0.5,5c0,-2 3,-4 6,-4l5,2v5l-5,3l-6,-2z" fill="#949494"/><path d="M0.5,5.5l6,2l5,-3" stroke="#bdbdbd" stroke-width="0.5" fill="none"/></g><rect x="30.5" y="202.75" width="4" height="0.5" fill="#cfcfcf"/><g transform="translate(34.02,198.02) scale(0.83)"><path d="M0.5,5c0,-2 3,-4 6,-4l5,2v5l-5,3l-6,-2z" fill="#949494"/><path d="M0.5,5.5l6,2l5,-3" stroke="#bdbdbd" stroke-width="0.5" fill="none"/></g><path d="M27.7,210.0L29.7,212.0L27.7,214.0" fill="none" stroke="#666" stroke-width="0.8"/><rect x="30.5" y="211.75" width="4" height="0.5" fill="#cfcfcf"/><g transform="translate(34.02,207.02) scale(0.83)"><path d="M0.5,7l7,-5l4,1.5v3l-7,4.5l-4,-1.5z" fill="#959595"/><path d="M0.5,7l4,1.5l7,-4.5" stroke="#c8c8c8" stroke-width="0.5" fill="none"/></g><path d="M27.7,219.0L29.7,221.0L27.7,223.0" fill="none" stroke="#666" stroke-width="0.8"/><rect x="30.5" y="220.75" width="4" height="0.5" fill="#cfcfcf"/><g transform="translate(34.02,216.02) scale(0.83)"><path d="M1,3.5l4.5,-2.5l5,2v6.5l-5,2l-4.5,-2z" fill="#3a66b0" stroke="#1d3f78" stroke-width="0.5"/><path d="M1,8l4,-2l2,3v2.5l-1.5,0.5l-4.5,-2z" fill="#d42a2a"/><circle cx="8.3" cy="9" r="2.6" fill="#2ec22e"/><path d="M8.3,7.2v3" stroke="#fff" stroke-width="1.1"/></g><path d="M16.5,228.8L18.5,230.8L20.5,228.8" fill="none" stroke="#777" stroke-width="0.8"/><g transform="translate(24.92,225.92) scale(0.68)"><path d="M1,5l4,-3.5l5,2v5.5l-4,3l-5,-2z" fill="#2f5ea8" stroke="#1d3f78" stroke-width="0.5"/><path d="M3.5,3l2.5,-2l3.5,1.5v2.5l-2.5,2z" fill="#5a88cc"/></g><path d="M27.7,237.0L29.7,239.0L27.7,241.0" fill="none" stroke="#666" stroke-width="0.8"/><rect x="30.5" y="238.75" width="4" height="0.5" fill="#cfcfcf"/><g transform="translate(34.02,234.02) scale(0.83)"><path d="M5,1v6l-4,4M5,7h6" fill="none" stroke="#777" stroke-width="0.9"/></g><rect x="30.5" y="247.75" width="4" height="0.5" fill="#cfcfcf"/><g transform="translate(34.02,243.02) scale(0.83)"><path d="M6,1l4.8,4.8l-4.8,4.8l-4.8,-4.8z" fill="none" stroke="#666" stroke-width="0.9"/></g><rect x="30.5" y="256.75" width="4" height="0.5" fill="#cfcfcf"/><g transform="translate(34.02,252.02) scale(0.83)"><path d="M6,1l4.8,4.8l-4.8,4.8l-4.8,-4.8z" fill="none" stroke="#666" stroke-width="0.9"/></g><rect x="30.5" y="265.75" width="4" height="0.5" fill="#cfcfcf"/><g transform="translate(34.02,261.02) scale(0.83)"><path d="M6,1l4.8,4.8l-4.8,4.8l-4.8,-4.8z" fill="none" stroke="#666" stroke-width="0.9"/></g><rect x="30.5" y="274.75" width="4" height="0.5" fill="#cfcfcf"/><g transform="translate(34.02,270.02) scale(0.83)"><path d="M6,1l4.8,4.8l-4.8,4.8l-4.8,-4.8z" fill="none" stroke="#666" stroke-width="0.9"/></g><rect x="30.5" y="283.75" width="4" height="0.5" fill="#cfcfcf"/><g transform="translate(34.02,279.02) scale(0.83)"><path d="M6,1l4.8,4.8l-4.8,4.8l-4.8,-4.8z" fill="none" stroke="#666" stroke-width="0.9"/></g><path d="M27.7,291.0L29.7,293.0L27.7,295.0" fill="none" stroke="#666" stroke-width="0.8"/><rect x="30.5" y="292.75" width="4" height="0.5" fill="#cfcfcf"/><g transform="translate(34.02,288.02) scale(0.83)"><path d="M1,5l5,-3l5,2v6l-5,1.5l-5,-2z" fill="#999"/><rect x="2" y="5.5" width="3" height="3" fill="#ddd"/></g><rect x="30.5" y="301.75" width="4" height="0.5" fill="#cfcfcf"/><g transform="translate(34.02,297.02) scale(0.83)"><path d="M0.5,5c0,-2 3,-4 6,-4l5,2v5l-5,3l-6,-2z" fill="#949494"/><path d="M0.5,5.5l6,2l5,-3" stroke="#bdbdbd" stroke-width="0.5" fill="none"/></g><rect x="30.5" y="310.75" width="4" height="0.5" fill="#cfcfcf"/><g transform="translate(34.02,306.02) scale(0.83)"><path d="M1,3.5l4.5,-2.5l5,2v6.5l-5,2l-4.5,-2z" fill="#3a66b0" stroke="#1d3f78" stroke-width="0.5"/><path d="M1,8l4,-2l2,3v2.5l-1.5,0.5l-4.5,-2z" fill="#d42a2a"/><circle cx="8.3" cy="9" r="2.6" fill="#2ec22e"/><path d="M8.3,7.2v3" stroke="#fff" stroke-width="1.1"/></g><rect x="23" y="315.7" width="73" height="8.6" fill="#e4e4fa"/><path d="M16.5,318.8L18.5,320.8L20.5,318.8" fill="none" stroke="#777" stroke-width="0.8"/><g transform="translate(24.92,315.92) scale(0.68)"><path d="M1,5l4,-3.5l5,2v5.5l-4,3l-5,-2z" fill="#2f5ea8" stroke="#1d3f78" stroke-width="0.5"/><path d="M3.5,3l2.5,-2l3.5,1.5v2.5l-2.5,2z" fill="#5a88cc"/></g><path d="M27.7,327.0L29.7,329.0L27.7,331.0" fill="none" stroke="#666" stroke-width="0.8"/><rect x="30.5" y="328.75" width="4" height="0.5" fill="#cfcfcf"/><g transform="translate(34.02,324.02) scale(0.83)"><path d="M5,1v6l-4,4M5,7h6" fill="none" stroke="#777" stroke-width="0.9"/></g><path d="M27.7,336.0L29.7,338.0L27.7,340.0" fill="none" stroke="#666" stroke-width="0.8"/><rect x="30.5" y="337.75" width="4" height="0.5" fill="#cfcfcf"/><g transform="translate(34.02,333.02) scale(0.83)"><path d="M1,4l5,-2.5l5,2.5v5l-5,2.5l-5,-2.5z" fill="#959595"/><path d="M1,4l5,2.5l5,-2.5M6,6.5v5M1,6.5l5,2.5l5,-2.5" stroke="#cacaca" stroke-width="0.5" fill="none"/></g><rect x="30.5" y="346.75" width="4" height="0.5" fill="#cfcfcf"/><g transform="translate(34.02,342.02) scale(0.83)"><path d="M1,3.5l4.5,-2.5l5,2v6.5l-5,2l-4.5,-2z" fill="#3a66b0" stroke="#1d3f78" stroke-width="0.5"/><path d="M1,8l4,-2l2,3v2.5l-1.5,0.5l-4.5,-2z" fill="#d42a2a"/><circle cx="8.3" cy="9" r="2.6" fill="#2ec22e"/><path d="M8.3,7.2v3" stroke="#fff" stroke-width="1.1"/></g><rect x="18.25" y="126" width="0.6" height="194" fill="#c8c8c8"/><rect x="28.05" y="135" width="0.6" height="86" fill="#c8c8c8"/><rect x="28.05" y="234" width="0.6" height="77" fill="#c8c8c8"/><rect x="28.05" y="324" width="0.6" height="23" fill="#c8c8c8"/><rect x="28.1" y="220.75" width="6" height="0.6" fill="#c8c8c8"/><rect x="28.1" y="310.75" width="6" height="0.6" fill="#c8c8c8"/><rect x="28.1" y="346.75" width="6" height="0.6" fill="#c8c8c8"/><rect x="18.3" y="229.75" width="6" height="0.6" fill="#c8c8c8"/><rect x="18.3" y="319.75" width="6" height="0.6" fill="#c8c8c8"/></svg><div class="a" style="left:26px;top:118.8px;color:#fff;font-weight:bold">Cekic_</div><div class="a" style="left:36px;top:127.8px;color:#555;font-weight:normal">Bas</div><div class="a" style="left:46px;top:136.8px;color:#555;font-weight:normal">Origin</div><div class="a" style="left:46px;top:145.8px;color:#555;font-weight:normal">Revolution</div><div class="a" style="left:46px;top:154.8px;color:#555;font-weight:normal">Pocket</div><div class="a" style="left:46px;top:163.8px;color:#555;font-weight:normal">Mirrored</div><div class="a" style="left:46px;top:172.8px;color:#555;font-weight:normal">Pocket001</div><div class="a" style="left:46px;top:181.8px;color:#555;font-weight:normal">Pad</div><div class="a" style="left:46px;top:190.8px;color:#555;font-weight:normal">Fillet</div><div class="a" style="left:46px;top:199.8px;color:#555;font-weight:normal">Fillet001</div><div class="a" style="left:46px;top:208.8px;color:#555;font-weight:normal">Pocket002</div><div class="a" style="left:46px;top:217.8px;color:#555;font-weight:normal">Pocket003</div><div class="a" style="left:36px;top:226.8px;color:#555;font-weight:normal">Kol</div><div class="a" style="left:46px;top:235.8px;color:#555;font-weight:normal">Origin001</div><div class="a" style="left:46px;top:244.8px;color:#555;font-weight:normal">DatumPlane</div><div class="a" style="left:46px;top:253.8px;color:#555;font-weight:normal">DatumPlane001</div><div class="a" style="left:46px;top:262.8px;color:#555;font-weight:normal">DatumPlane002</div><div class="a" style="left:46px;top:271.8px;color:#555;font-weight:normal">DatumPlane003</div><div class="a" style="left:46px;top:280.8px;color:#555;font-weight:normal">DatumPlane004</div><div class="a" style="left:46px;top:289.8px;color:#555;font-weight:normal">AdditiveLoft</div><div class="a" style="left:46px;top:298.8px;color:#555;font-weight:normal">Fillet002</div><div class="a" style="left:46px;top:307.8px;color:#555;font-weight:normal">Pad001</div><div class="a" style="left:36px;top:316.8px;color:#333;font-weight:bold">Pim</div><div class="a" style="left:46px;top:325.8px;color:#555;font-weight:normal">Origin002</div><div class="a" style="left:46px;top:334.8px;color:#555;font-weight:normal">Pad002</div><div class="a" style="left:46px;top:343.8px;color:#555;font-weight:normal">Draft</div>

<!-- splitter -->
<svg style="left:0;top:0" width="190" height="400">
<rect x="81.6" y="392.1" width="2.6" height="0.9" fill="#666"/><rect x="85.6" y="392.1" width="2.6" height="0.9" fill="#666"/><rect x="89.6" y="392.1" width="2.6" height="0.9" fill="#666"/><rect x="93.6" y="392.1" width="2.6" height="0.9" fill="#666"/><rect x="97.6" y="392.1" width="2.6" height="0.9" fill="#666"/>
</svg>
<svg style="left:0;top:0" width="190" height="300">
<rect x="184" y="282.0" width="1" height="2.2" fill="#5a5a5a"/><rect x="184" y="285.9" width="1" height="2.2" fill="#5a5a5a"/><rect x="184" y="289.8" width="1" height="2.2" fill="#5a5a5a"/><rect x="184" y="293.7" width="1" height="2.2" fill="#5a5a5a"/><rect x="184" y="297.6" width="1" height="2.2" fill="#5a5a5a"/>
</svg>

<!-- property -->
<div style="position:absolute;left:3px;top:398.4px;width:176px;height:103.6px;background:#efefef;border:0.8px solid #d6d6d6;border-radius:2px"></div>
<div style="position:absolute;left:0;top:411.5px;width:171px;height:90px;overflow:hidden"><div style="position:absolute;left:0;top:-411.5px;width:960px;height:540px"><div style="position:absolute;left:14px;top:415.09999999999997px;width:157px;height:9.3px;background:#e6e6e6"></div><div style="position:absolute;left:4px;top:415.09999999999997px;width:10px;height:9.3px;background:#efefef"></div><div style="position:absolute;left:8.5px;top:420.09999999999997px;width:4px;height:0.6px;background:#cfcfcf"></div><div style="position:absolute;left:14px;top:414.2px;width:157px;height:0.9px;background:#f7f7f7"></div><div style="position:absolute;left:14px;top:425.09999999999997px;width:157px;height:9.3px;background:#ededed"></div><div style="position:absolute;left:4px;top:425.09999999999997px;width:10px;height:9.3px;background:#efefef"></div><div style="position:absolute;left:8.5px;top:430.09999999999997px;width:4px;height:0.6px;background:#cfcfcf"></div><div style="position:absolute;left:14px;top:424.2px;width:157px;height:0.9px;background:#f7f7f7"></div><div style="position:absolute;left:14px;top:435.09999999999997px;width:157px;height:9.3px;background:#e6e6e6"></div><div style="position:absolute;left:4px;top:435.09999999999997px;width:10px;height:9.3px;background:#efefef"></div><div style="position:absolute;left:8.5px;top:440.09999999999997px;width:4px;height:0.6px;background:#cfcfcf"></div><div style="position:absolute;left:14px;top:434.2px;width:157px;height:0.9px;background:#f7f7f7"></div><div style="position:absolute;left:14px;top:445.09999999999997px;width:157px;height:9.3px;background:#ededed"></div><div style="position:absolute;left:4px;top:445.09999999999997px;width:10px;height:9.3px;background:#efefef"></div><div style="position:absolute;left:8.5px;top:450.09999999999997px;width:4px;height:0.6px;background:#cfcfcf"></div><div style="position:absolute;left:14px;top:444.2px;width:157px;height:0.9px;background:#f7f7f7"></div><div style="position:absolute;left:14px;top:455.09999999999997px;width:157px;height:9.3px;background:#e6e6e6"></div><div style="position:absolute;left:4px;top:455.09999999999997px;width:10px;height:9.3px;background:#efefef"></div><div style="position:absolute;left:8.5px;top:460.09999999999997px;width:4px;height:0.6px;background:#cfcfcf"></div><div style="position:absolute;left:14px;top:454.2px;width:157px;height:0.9px;background:#f7f7f7"></div><div style="position:absolute;left:14px;top:465.09999999999997px;width:157px;height:9.3px;background:#ededed"></div><div style="position:absolute;left:4px;top:465.09999999999997px;width:10px;height:9.3px;background:#efefef"></div><div style="position:absolute;left:8.5px;top:470.09999999999997px;width:4px;height:0.6px;background:#cfcfcf"></div><div style="position:absolute;left:14px;top:464.2px;width:157px;height:0.9px;background:#f7f7f7"></div><div style="position:absolute;left:14px;top:475.09999999999997px;width:157px;height:9.3px;background:#e6e6e6"></div><div style="position:absolute;left:4px;top:475.09999999999997px;width:10px;height:9.3px;background:#efefef"></div><div style="position:absolute;left:8.5px;top:480.09999999999997px;width:4px;height:0.6px;background:#cfcfcf"></div><div style="position:absolute;left:14px;top:474.2px;width:157px;height:0.9px;background:#f7f7f7"></div><div style="position:absolute;left:14px;top:485.09999999999997px;width:157px;height:9.3px;background:#ededed"></div><div style="position:absolute;left:4px;top:485.09999999999997px;width:10px;height:9.3px;background:#efefef"></div><div style="position:absolute;left:8.5px;top:490.09999999999997px;width:4px;height:0.6px;background:#cfcfcf"></div><div style="position:absolute;left:14px;top:484.2px;width:157px;height:0.9px;background:#f7f7f7"></div><div style="position:absolute;left:14px;top:495.09999999999997px;width:157px;height:9.3px;background:#e6e6e6"></div><div style="position:absolute;left:4px;top:495.09999999999997px;width:10px;height:9.3px;background:#efefef"></div><div style="position:absolute;left:8.5px;top:500.09999999999997px;width:4px;height:0.6px;background:#cfcfcf"></div><div style="position:absolute;left:14px;top:494.2px;width:157px;height:0.9px;background:#f7f7f7"></div><div class="a" style="left:15px;top:406.7px;color:#555">Company</div><div class="a" style="left:15px;top:416.7px;color:#555">Created By</div><div class="a" style="left:55px;top:416.7px;color:#444">Mustafa Halil (@AcikKaynakci)</div><div class="a" style="left:15px;top:426.7px;color:#555">Creation ...</div><div class="a" style="left:55px;top:426.7px;color:#444">2021-10-08T11:57:43Z</div><div class="a" style="left:15px;top:436.7px;color:#555">File Name</div><div class="a" style="left:55px;top:436.7px;color:#444">/home/mhalil/Masaüstü/Cekic_.FCStd</div><div class="a" style="left:15px;top:446.7px;color:#555">Id</div><div class="a" style="left:15px;top:456.7px;color:#555">Label</div><div class="a" style="left:55px;top:456.7px;color:#444">Cekic_</div><div class="a" style="left:15px;top:466.7px;color:#555">Last Modif...</div><div class="a" style="left:15px;top:476.7px;color:#555">Last Modif...</div><div class="a" style="left:55px;top:476.7px;color:#444">2021-10-08T12:55:36Z</div><div class="a" style="left:15px;top:486.7px;color:#555">License</div><div class="a" style="left:55px;top:486.7px;color:#444">Creative Commons Attribution-Non...</div><div class="a" style="left:15px;top:496.7px;color:#555">License URL</div><div class="a" style="left:55px;top:496.7px;color:#444">http://creativecommons.org/license...</div></div></div><div style="position:absolute;left:53px;top:411px;width:0.6px;height:91px;background:#dadada"></div><div style="position:absolute;left:8.3px;top:411px;width:0.6px;height:91px;background:#d4d4d4"></div>
<div style="position:absolute;left:3px;top:398.4px;width:168px;height:13.3px;background:#c4c4c4;border-radius:2px 0 0 0"></div>
<div style="position:absolute;left:53px;top:398.4px;width:0.8px;height:13.3px;background:#b8b8b8"></div>
<div class="a" style="left:6.2px;top:401.6px;color:#444">Property</div>
<div class="a" style="left:56.2px;top:401.6px;color:#444">Value</div>
<div style="position:absolute;left:171px;top:398.4px;width:8px;height:103.6px;background:#f4f4f4;border-left:0.6px solid #e0e0e0"></div>
<div style="position:absolute;left:173px;top:423.8px;width:3px;height:42px;background:#b6b6b6;border-radius:1.5px"></div>
<svg style="left:0;top:0" width="190" height="510">
<path d="M172.8,402.6l2,-1.8l2,1.8" fill="none" stroke="#333" stroke-width="0.8"/>
<path d="M172.8,496.8l2,1.8l2,-1.8" fill="none" stroke="#333" stroke-width="0.8"/>
</svg>

<!-- bottom left tabs -->
<div style="position:absolute;left:0;top:503px;width:182px;height:0.8px;background:#e4e4e4"></div>
<div style="position:absolute;left:50.7px;top:504.5px;width:42px;height:16px;background:#f8f8f8;border-bottom:2.2px solid #3b78e7;border-left:0.8px solid #e0e0e0;border-right:0.8px solid #e0e0e0;border-top:0.8px solid #e0e0e0;border-radius:1.5px 1.5px 0 0"></div>
<div class="a" style="left:20.5px;top:508.6px;color:#444">View</div>
<div class="a" style="left:64.5px;top:508.6px;color:#444">Data</div>

<!-- doc tab -->
<div style="position:absolute;left:187px;top:503.5px;width:60.4px;height:16px;background:#f6f6f6;border-bottom:2px solid #3b78e7;border-left:0.8px solid #e0e0e0;border-right:0.8px solid #e0e0e0"></div>
<svg style="left:0;top:0" width="960" height="540">
<path d="M190.5,507.3h4.2M190.5,507.3v8.4M190.5,510.8h3" stroke="#c81818" stroke-width="1.9" fill="none"/>
<circle cx="194.4" cy="512.6" r="1.9" fill="#7a9ad8" stroke="#2f5aa8" stroke-width="1.1"/>
<path d="M237.8,509.2l4.4,4.4M242.2,509.2l-4.4,4.4" stroke="#555" stroke-width="0.8"/>
</svg>
<div class="a" style="left:202px;top:507.5px;color:#444">Cekic_ : 1</div>

<!-- status -->
<div class="a" style="left:1.2px;top:526.7px;color:#333;letter-spacing:0.08px">Valid, Internal name: Draft</div>
<div style="position:absolute;left:821.3px;top:523.3px;width:56.2px;height:13px;background:linear-gradient(#fafafa,#ececec);border:0.8px solid #d2d2d2;border-radius:2px"></div>
<svg style="left:0;top:0" width="960" height="540">
<rect x="835" y="526.3" width="3.6" height="6.4" rx="1.8" fill="none" stroke="#555" stroke-width="0.8"/>
<rect x="836.5" y="527.3" width="0.7" height="1.8" fill="#555"/>
</svg>
<div class="a" style="left:843px;top:526.7px;color:#6a6a6a">Blender</div>
<div class="a" style="left:883px;top:526.7px;color:#333;letter-spacing:0.1px">657,09 mm x 374,02 mm</div>
<div style="position:absolute;left:0;top:537.8px;width:960px;height:1px;background:#ffffff"></div><div style="position:absolute;left:0;top:538.9px;width:960px;height:1.1px;background:#8a8a8a"></div>
</div></body></html>
